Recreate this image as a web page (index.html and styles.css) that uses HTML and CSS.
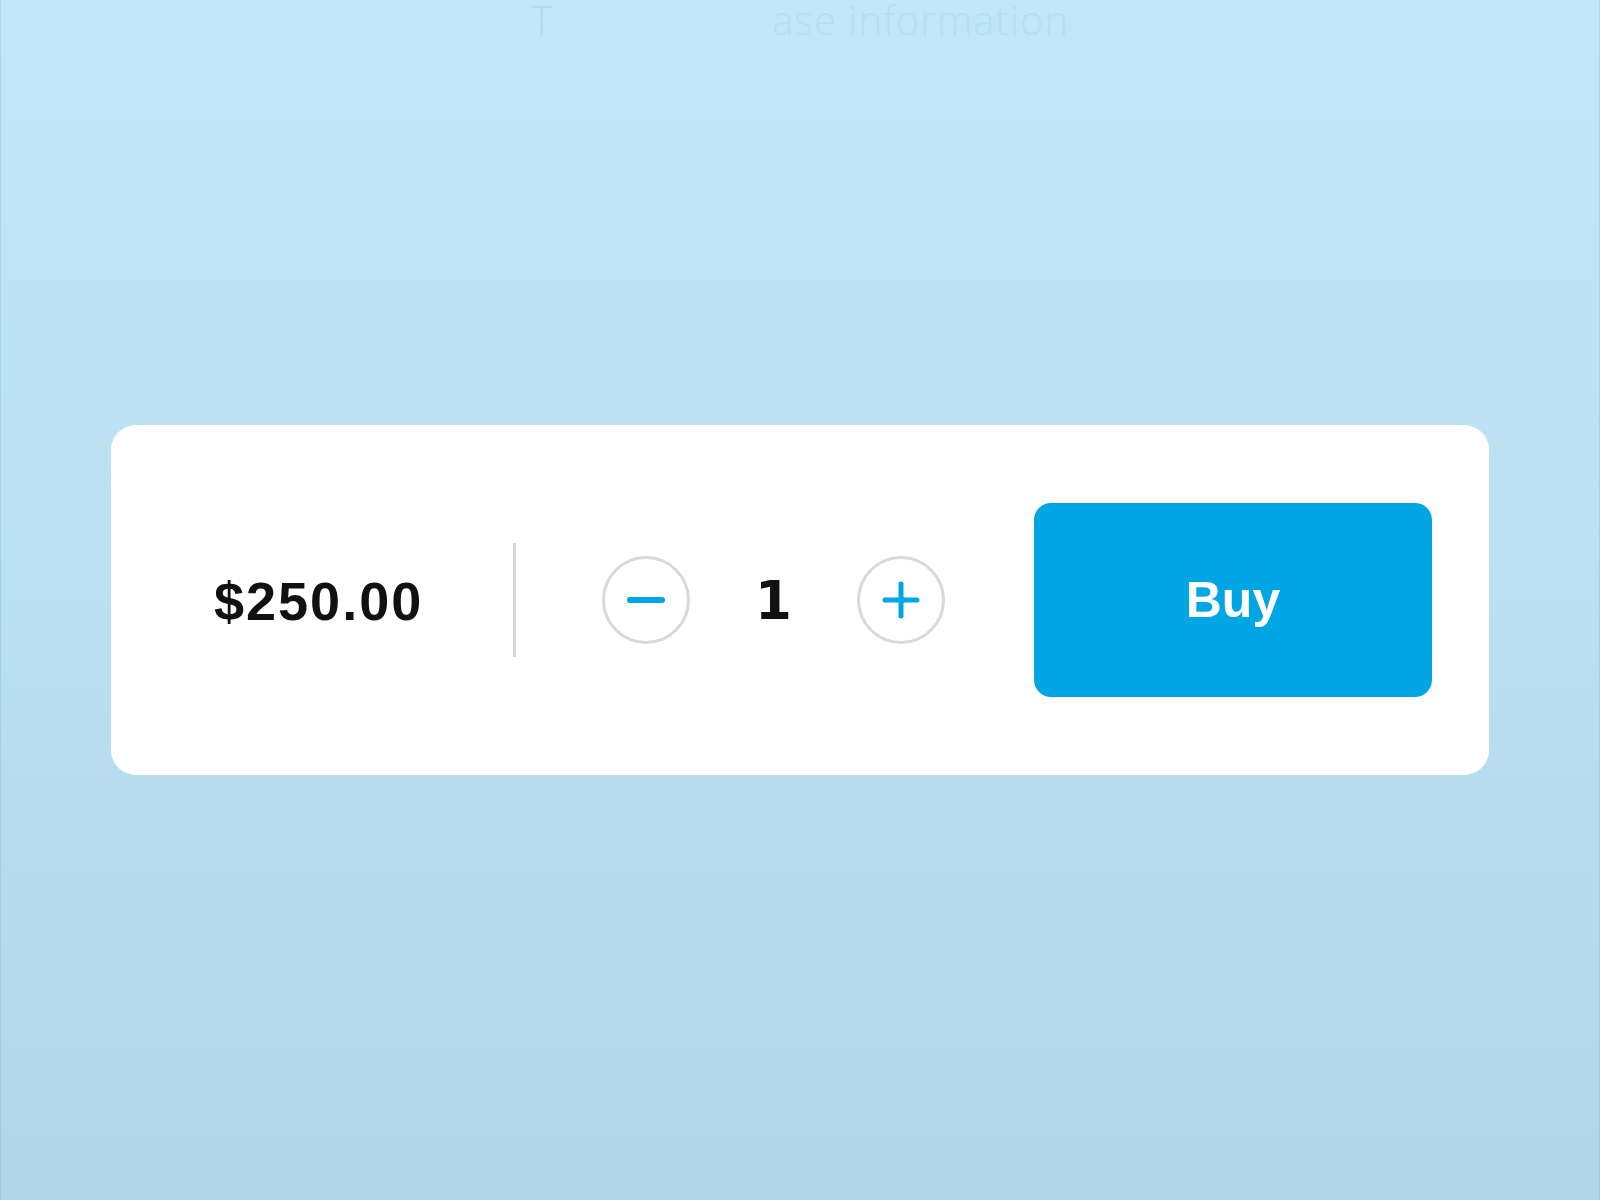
FILE: index.html
```html
<!DOCTYPE html>
<html lang="en">
<head>
<meta charset="utf-8">
<title>Buy</title>
<link rel="stylesheet" href="styles.css">
</head>
<body>
<div class="ghost-title"><span class="ghost-a">T</span><span class="ghost-hidden">ap to purch</span><span class="ghost-b">ase information</span></div>
<main class="stage">
  <section class="card">
    <div class="price">$250.00</div>
    <div class="divider"></div>
    <div class="stepper">
      <button class="step-btn" type="button" aria-label="Decrease">
        <svg width="40" height="40" viewBox="0 0 40 40"><line x1="4" y1="20" x2="36" y2="20" stroke="#00a5e3" stroke-width="6" stroke-linecap="round"/></svg>
      </button>
      <div class="qty">1</div>
      <button class="step-btn" type="button" aria-label="Increase">
        <svg width="40" height="40" viewBox="0 0 40 40"><line x1="4" y1="20" x2="36" y2="20" stroke="#00a5e3" stroke-width="5" stroke-linecap="round"/><line x1="20" y1="4" x2="20" y2="36" stroke="#00a5e3" stroke-width="5" stroke-linecap="round"/></svg>
      </button>
    </div>
    <button class="buy" type="button">Buy</button>
  </section>
</main>
</body>
</html>
```
FILE: styles.css
```css
html, body {
  margin: 0;
  padding: 0;
}
body {
  width: 1600px;
  height: 1200px;
  background: linear-gradient(180deg, #c1e6f8 0%, #bae0f2 50%, #b1d5e8 100%);
  box-shadow: inset 1px 0 0 rgba(120, 160, 180, 0.25), inset -1px 0 0 rgba(120, 160, 180, 0.25);
  font-family: "Liberation Sans", Arial, sans-serif;
  position: relative;
  overflow: hidden;
}
.ghost-title {
  position: absolute;
  top: -4px;
  left: 0;
  right: 0;
  text-align: center;
  font-family: "Open Sans", "Liberation Sans", sans-serif;
  font-weight: 300;
  font-size: 40px;
  line-height: 48px;
  color: #93bdd1;
  letter-spacing: 1px;
}
.ghost-a { opacity: 0.3; }
.ghost-hidden { opacity: 0; }
.ghost-b { opacity: 0.2; }
.stage {
  height: 1200px;
  display: flex;
  align-items: center;
  justify-content: center;
}
.card {
  width: 1378px;
  height: 350px;
  box-sizing: border-box;
  background: #ffffff;
  border-radius: 25px;
  display: flex;
  align-items: center;
  padding: 0 57px 0 103px;
}
.price {
  width: 299px;
  font-weight: 700;
  font-size: 54px;
  letter-spacing: 2px;
  color: #111111;
  line-height: 1;
  padding-top: 2px;
}
.divider {
  width: 3px;
  height: 114px;
  background: #d6d6da;
  margin-right: 86px;
}
.stepper {
  display: flex;
  align-items: center;
}
.step-btn {
  width: 88px;
  height: 88px;
  box-sizing: border-box;
  border: 3px solid #d9d9d9;
  border-radius: 50%;
  background: #ffffff;
  padding: 0;
  display: flex;
  align-items: center;
  justify-content: center;
}
.qty {
  width: 167px;
  text-align: center;
  font-family: "DejaVu Sans", sans-serif;
  font-weight: 700;
  font-size: 53px;
  color: #111111;
  line-height: 1;
}
.buy {
  margin-left: auto;
  width: 398px;
  height: 194px;
  border: none;
  border-radius: 17px;
  background: #00a5e3;
  color: #ffffff;
  font-family: "Liberation Sans", Arial, sans-serif;
  font-weight: 700;
  font-size: 50px;
  padding: 0;
}
```
